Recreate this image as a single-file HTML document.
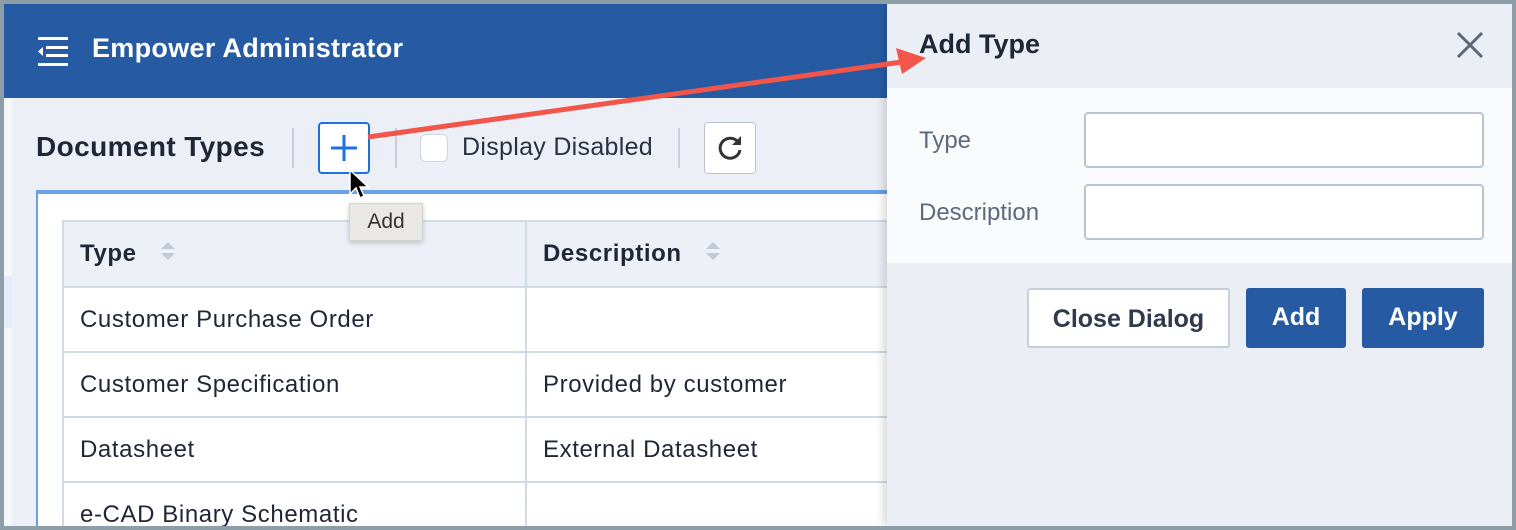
<!DOCTYPE html>
<html><head><style>
*{box-sizing:border-box;margin:0;padding:0}
body{width:1516px;height:530px;overflow:hidden;background:#8e9ea8;font-family:"Liberation Sans",Arial,sans-serif;position:relative}
.frame{position:absolute;left:4px;top:4px;width:1508px;height:522px;background:#eceff5;overflow:hidden}
.top{position:absolute;left:0;top:0;width:1508px;height:94px;background:#265ba3}
.title{position:absolute;left:88px;top:29px;color:#fff;font-weight:bold;font-size:27px;letter-spacing:0.3px}
.strip{position:absolute;left:0;top:94px;width:8px;height:430px;background:#f6f7f9}
.strip2{position:absolute;left:0;top:272px;width:8px;height:52px;background:#e4edf8}
.h1{position:absolute;left:32px;top:127px;font-size:28px;font-weight:bold;color:#1f2736;letter-spacing:0.4px}
.sep{position:absolute;top:124px;width:2px;height:40px;background:#c7d0dc}
.plus{position:absolute;left:314px;top:118px;width:52px;height:52px;border:2px solid #1a73e0;border-radius:4px;background:#fff}
.chk{position:absolute;left:416px;top:130px;width:28px;height:28px;border:1px solid #cfd5dd;border-radius:6px;background:#fff}
.dd{position:absolute;left:458px;top:129px;font-size:25px;color:#2a3140;letter-spacing:0.3px}
.ref{position:absolute;left:700px;top:118px;width:52px;height:52px;border:1px solid #b9c3cf;border-radius:4px;background:#fff}
.panel{position:absolute;left:32px;top:186px;width:1000px;height:340px;background:#fff;border-top:4px solid #6aa0e6;border-left:2px solid #6aa0e6}
.tw{position:absolute;left:58px;top:216px;width:900px;height:306px;overflow:hidden}
table{border-collapse:collapse;font-size:24px;color:#1f2736;letter-spacing:0.6px}
td{border:2px solid #d0dbe6;height:65px;padding-left:16px}
th{border:2px solid #d0dbe6;height:66px;padding-left:16px;text-align:left;background:#edf0f7;font-size:24px}
.tip{position:absolute;left:345px;top:199px;width:74px;height:38px;background:#e9e8e4;border:1px solid #d4d3cf;font-size:21px;color:#333;text-align:center;line-height:36px;box-shadow:0 2px 5px rgba(0,0,0,.2)}
.dlg{position:absolute;left:883px;top:0;width:625px;height:522px;background:#ebeef5;box-shadow:-4px 0 8px rgba(0,0,0,.15)}
.dh{position:absolute;left:32px;top:25px;font-size:27px;font-weight:bold;color:#1f2736}
.db{position:absolute;left:0;top:84px;width:625px;height:175px;background:#fafbfc}
.lbl{position:absolute;left:32px;font-size:24px;color:#5c6a7d}
.inp{position:absolute;left:197px;width:400px;height:56px;border:2px solid #b8c4d0;border-radius:4px;background:#fff}
.btn{position:absolute;top:284px;height:60px;border-radius:3px;font-size:25px;font-weight:bold;text-align:center;line-height:58px}
</style></head><body>
<div class="frame">
<div class="top">
<svg style="position:absolute;left:34px;top:33px" width="32" height="30"><rect x="0" y="0" width="30" height="3" fill="#fff"/><rect x="8" y="9" width="22" height="3" fill="#fff"/><rect x="8" y="17" width="22" height="3" fill="#fff"/><rect x="0" y="26" width="30" height="3" fill="#fff"/><path d="M0 14.5 L5 10 L5 19Z" fill="#fff"/></svg>
<div class="title">Empower Administrator</div>
</div>
<div class="strip"></div><div class="strip2"></div>
<div class="h1">Document Types</div>
<div class="sep" style="left:288px"></div>
<div class="plus"><svg width="48" height="48"><path d="M24 11V37M11 24H37" stroke="#1a73e0" stroke-width="3"/></svg></div>
<div class="sep" style="left:391px"></div>
<div class="chk"></div>
<div class="dd">Display Disabled</div>
<div class="sep" style="left:674px"></div>
<div class="ref"><svg width="50" height="50"><path d="M33 19 A10 10 0 1 0 35 27" fill="none" stroke="#333" stroke-width="3"/><path d="M36 13 L36 22 L27 22Z" fill="#333"/></svg></div>
<div class="panel"></div>
<div class="tw">
<table>
<tr><th style="width:463px">Type <svg style="margin-left:16px" width="16" height="20"><path d="M8 1L15 8H1Z M8 19L15 12H1Z" fill="#c1cad4"/></svg></th><th style="width:420px">Description <svg style="margin-left:16px" width="16" height="20"><path d="M8 1L15 8H1Z M8 19L15 12H1Z" fill="#c1cad4"/></svg></th></tr>
<tr><td>Customer Purchase Order</td><td></td></tr>
<tr><td>Customer Specification</td><td>Provided by customer</td></tr>
<tr><td>Datasheet</td><td>External Datasheet</td></tr>
<tr><td>e-CAD Binary Schematic</td><td></td></tr>
</table>
</div>
<div class="tip">Add</div>
<svg style="position:absolute;left:344px;top:164px" width="24" height="36"><path d="M2 2 L2 26 L8 20 L12 30 L16 28 L12 19 L20 19Z" fill="#000" stroke="#fff" stroke-width="1.5"/></svg>
<div class="dlg">
<div class="dh">Add Type</div>
<svg style="position:absolute;left:568px;top:26px" width="30" height="30"><path d="M3 3L27 27M27 3L3 27" stroke="#5c6675" stroke-width="3"/></svg>
<div class="db">
<div class="lbl" style="top:39px">Type</div>
<div class="inp" style="top:24px"></div>
<div class="lbl" style="top:111px">Description</div>
<div class="inp" style="top:96px"></div>
</div>
<div class="btn" style="left:140px;width:203px;background:#fff;border:2px solid #c7d0da;color:#2f3a4b">Close Dialog</div>
<div class="btn" style="left:359px;width:100px;background:#265ba3;color:#fff">Add</div>
<div class="btn" style="left:475px;width:122px;background:#265ba3;color:#fff">Apply</div>
</div>
<svg style="position:absolute;left:0;top:0" width="1508" height="522"><path d="M364 133 L898 58" stroke="#f2554a" stroke-width="5"/><path d="M922 54 L892 44 L898 70Z" fill="#f2554a"/></svg>
</div>
</body></html>
